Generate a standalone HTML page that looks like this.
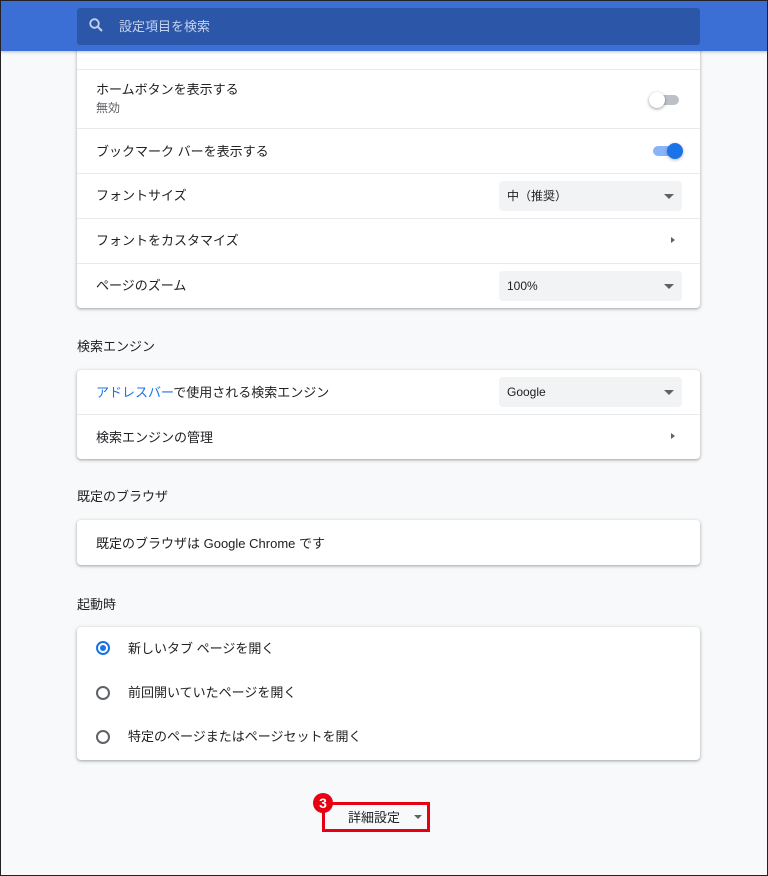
<!DOCTYPE html><html><head><meta charset="utf-8"><style>
*{margin:0;padding:0;box-sizing:border-box}
body{width:768px;height:876px;background:#f8f9fa;position:relative;overflow:hidden;font-family:"Liberation Sans","Noto Sans CJK JP",sans-serif;font-size:13px;color:#202124;line-height:1.3}
.a{position:absolute}
.card{position:absolute;left:77px;width:623px;background:#fff;border-radius:4px;box-shadow:0 1px 2px rgba(60,64,67,.3),0 1px 3px 1px rgba(60,64,67,.15)}
.row{position:absolute;left:0;right:0;border-top:1px solid #e8eaed}
.t{position:absolute;left:19px;margin-top:1px}
.sel{position:absolute;left:422px;width:183px;height:30px;background:#f1f3f4;border-radius:4px;font-size:12px;padding:8px 0 0 8px}
.sel:after{content:"";position:absolute;right:8px;top:13px;border:5px solid transparent;border-top:5px solid #5f6368}
.arr{position:absolute;left:594px;border:3.5px solid transparent;border-left:4px solid #5f6368}
.h{position:absolute;left:77px;font-size:13px;margin-top:1px}
.rad{position:absolute;left:19px;width:14px;height:14px;border:2px solid #5f6368;border-radius:50%}
</style></head><body>
<div class="card" style="top:40px;height:268px">
<div class="row" style="top:29px"></div>
<div class="t" style="top:41px">ホームボタンを表示する</div>
<div class="t" style="top:60px;color:#5f6368;font-size:12px">無効</div>
<div class="a" style="left:574px;top:55px;width:28px;height:10px;border-radius:5px;background:#bdc1c6"></div>
<div class="a" style="left:572px;top:52px;width:16px;height:16px;border-radius:50%;background:#fff;box-shadow:0 1px 3px rgba(0,0,0,.4)"></div>
<div class="row" style="top:88px"></div>
<div class="t" style="top:103px">ブックマーク バーを表示する</div>
<div class="a" style="left:576px;top:106px;width:28px;height:10px;border-radius:5px;background:#8ab4f8"></div>
<div class="a" style="left:590px;top:103px;width:16px;height:16px;border-radius:50%;background:#1a73e8;box-shadow:0 1px 3px rgba(0,0,0,.3)"></div>
<div class="row" style="top:133px"></div>
<div class="t" style="top:147px">フォントサイズ</div>
<div class="sel" style="top:141px">中（推奨）</div>
<div class="row" style="top:178px"></div>
<div class="t" style="top:192px">フォントをカスタマイズ</div>
<div class="arr" style="top:197px"></div>
<div class="row" style="top:223px"></div>
<div class="t" style="top:237px">ページのズーム</div>
<div class="sel" style="top:231px">100%</div>
</div>
<div class="a" style="left:0;top:0;width:768px;height:51px;background:#3b6fd6;box-shadow:0 1px 3px rgba(0,0,0,.25)"></div>
<div class="a" style="left:77px;top:8px;width:623px;height:37px;background:#2c57a9;border-radius:3px"></div>
<svg class="a" style="left:88px;top:17px" width="16" height="16" viewBox="0 0 16 16"><circle cx="6.5" cy="6.5" r="4.3" fill="none" stroke="#c5d2ee" stroke-width="1.8"/><path d="M9.7 9.7L14 14" stroke="#c5d2ee" stroke-width="2"/></svg>
<div class="a" style="left:119px;top:19px;color:#c5d2ee">設定項目を検索</div>
<div class="h" style="top:338px">検索エンジン</div>
<div class="card" style="top:370px;height:89px">
<div class="t" style="top:14px"><span style="color:#1a73e8">アドレスバー</span>で使用される検索エンジン</div>
<div class="sel" style="top:7px">Google</div>
<div class="row" style="top:44px"></div>
<div class="t" style="top:59px">検索エンジンの管理</div>
<div class="arr" style="top:63px"></div>
</div>
<div class="h" style="top:488px">既定のブラウザ</div>
<div class="card" style="top:520px;height:45px">
<div class="t" style="top:15px">既定のブラウザは Google Chrome です</div>
</div>
<div class="h" style="top:596px">起動時</div>
<div class="card" style="top:627px;height:133px">
<div class="rad" style="top:14px;border-color:#1a73e8"><div class="a" style="left:2px;top:2px;width:6px;height:6px;border-radius:50%;background:#1a73e8"></div></div>
<div class="t" style="left:51px;top:13px">新しいタブ ページを開く</div>
<div class="rad" style="top:59px"></div>
<div class="t" style="left:51px;top:57px">前回開いていたページを開く</div>
<div class="rad" style="top:103px"></div>
<div class="t" style="left:51px;top:101px">特定のページまたはページセットを開く</div>
</div>
<div class="a" style="left:322px;top:802px;width:108px;height:30px;border:3px solid #e60012"></div>
<div class="a" style="left:348px;top:810px">詳細設定</div>
<div class="a" style="left:414px;top:815px;border:4px solid transparent;border-top:4px solid #5f6368"></div>
<div class="a" style="left:313px;top:793px;width:20px;height:20px;border-radius:50%;background:#e60012;color:#fff;font-weight:bold;font-size:14px;text-align:center;line-height:20px">3</div>
<div class="a" style="left:0;top:0;width:768px;height:876px;border:1px solid #222"></div>
</body></html>
